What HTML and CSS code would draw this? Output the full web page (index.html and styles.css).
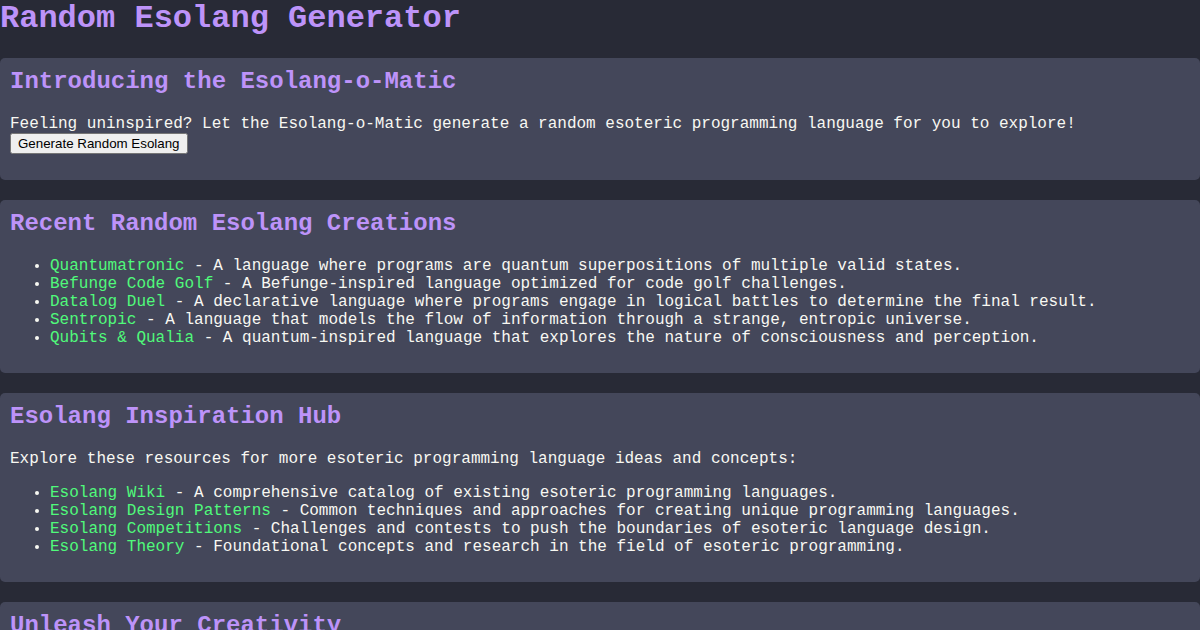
FILE: index.html
```html
<!DOCTYPE html>
<html lang="en">
<head>
<meta charset="utf-8">
<title>Random Esolang Generator</title>
<link rel="stylesheet" href="styles.css">
</head>
<body>
<h1 class="title">Random Esolang Generator</h1>
<main class="sections">
  <section class="card">
    <h2>Introducing the Esolang-o-Matic</h2>
    <p>Feeling uninspired? Let the Esolang-o-Matic generate a random esoteric programming language for you to explore!<br><button class="gen-btn">Generate Random Esolang</button></p>
  </section>
  <section class="card">
    <h2>Recent Random Esolang Creations</h2>
    <ul>
      <li><a href="#">Quantumatronic</a> - A language where programs are quantum superpositions of multiple valid states.</li>
      <li><a href="#">Befunge Code Golf</a> - A Befunge-inspired language optimized for code golf challenges.</li>
      <li><a href="#">Datalog Duel</a> - A declarative language where programs engage in logical battles to determine the final result.</li>
      <li><a href="#">Sentropic</a> - A language that models the flow of information through a strange, entropic universe.</li>
      <li><a href="#">Qubits &amp; Qualia</a> - A quantum-inspired language that explores the nature of consciousness and perception.</li>
    </ul>
  </section>
  <section class="card">
    <h2>Esolang Inspiration Hub</h2>
    <p>Explore these resources for more esoteric programming language ideas and concepts:</p>
    <ul>
      <li><a href="#">Esolang Wiki</a> - A comprehensive catalog of existing esoteric programming languages.</li>
      <li><a href="#">Esolang Design Patterns</a> - Common techniques and approaches for creating unique programming languages.</li>
      <li><a href="#">Esolang Competitions</a> - Challenges and contests to push the boundaries of esoteric language design.</li>
      <li><a href="#">Esolang Theory</a> - Foundational concepts and research in the field of esoteric programming.</li>
    </ul>
  </section>
  <section class="card">
    <h2>Unleash Your Creativity</h2>
    <p>Take the ideas generated here and turn them into your own weird and wonderful programming language.</p>
  </section>
</main>
</body>
</html>
```

FILE: styles.css
```css
html, body {
  margin: 0;
  padding: 0;
}
body {
  background: #282a36;
  color: #f8f8f2;
  font-family: "Courier New", Courier, monospace;
  font-size: 16px;
}
.title {
  margin: 0 0 21.44px 0;
  font-size: 32px;
  color: #bd93f9;
  font-weight: bold;
}
.sections {
  display: flex;
  flex-direction: column;
  gap: 20px;
}
.card {
  background: #44475a;
  border-radius: 5px;
  padding: 10px;
}
.card h2 {
  margin: 0 0 19.92px 0;
  font-size: 24px;
  color: #bd93f9;
}
.card p {
  margin: 16px 0;
}
.card ul {
  margin: 16px 0;
  padding-left: 40px;
}
.card a {
  color: #50fa7b;
  text-decoration: none;
}
.gen-btn {
  font-family: "Liberation Sans", Arial, sans-serif;
}
```
